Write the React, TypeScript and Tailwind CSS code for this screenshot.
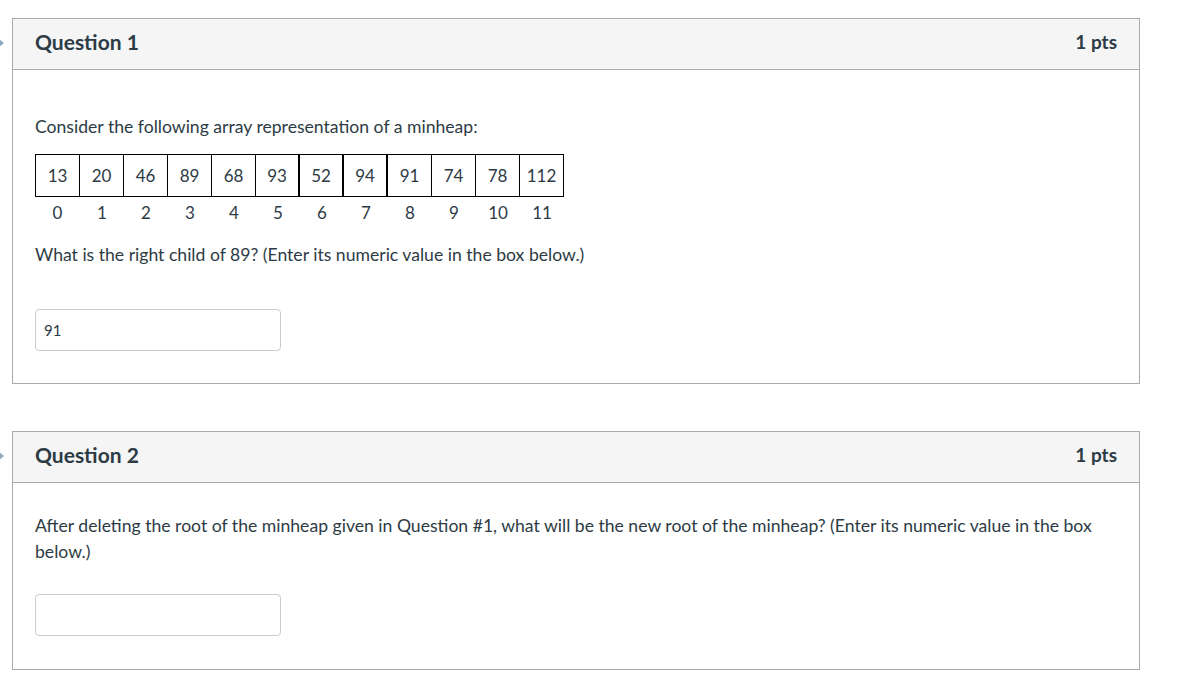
import React from 'react';

const heap = [13, 20, 46, 89, 68, 93, 52, 94, 91, 74, 78, 112];

// cells 93, 52 and 94 have the heavier right edge in the screenshot
const thick = [5, 6, 7];

const Marker: React.FC = () => (
  <svg
    className="absolute left-[-14px] top-[20px]"
    width="6"
    height="8"
    viewBox="0 0 6 8"
  >
    <polygon points="0,0 5,4 0,8" fill="#8fa7b9" />
  </svg>
);

const QuestionHeader: React.FC<{ title: string; points: string }> = ({ title, points }) => (
  <div className="flex h-[51px] items-center justify-between border-b border-[#aaaaaa] bg-[#f5f5f5] px-[22px] pb-[4px]">
    <h2 className="text-[21px] font-bold text-[#2d3b45]">{title}</h2>
    <span className="text-[19px] font-bold text-[#2d3b45]">{points}</span>
  </div>
);

const AnswerBox: React.FC<{ value?: string }> = ({ value }) => (
  <input
    type="text"
    defaultValue={value}
    className="h-[42px] w-[246px] rounded-[4px] border border-[#c7cdd1] bg-white px-[8px] text-[15px] text-[#2d3b45] outline-none"
  />
);

const HeapArray: React.FC = () => (
  <div className="text-[17px]">
    <div className="mt-[14px] flex">
      {heap.map((n, i) => (
        <div
          key={i}
          className={
            'flex h-[43px] items-center justify-center border-y border-black ' +
            (i === 0 ? 'w-[45px] border-l ' : 'w-[44px] ') +
            (thick.includes(i) ? 'border-r-2' : 'border-r')
          }
        >
          {n}
        </div>
      ))}
    </div>
    <div className="mt-[3px] flex h-[26px] items-center">
      {heap.map((_, i) => (
        <div key={i} className={'text-center ' + (i === 0 ? 'w-[45px]' : 'w-[44px]')}>
          {i}
        </div>
      ))}
    </div>
  </div>
);

export default function App() {
  return (
    <div className="min-h-screen bg-white pt-[18px] pl-[12px] font-['Lato','Helvetica_Neue',Arial,sans-serif] text-[17.6px] leading-[26px] text-[#2d3b45]">
      <div className="relative w-[1128px] border border-[#aaaaaa] bg-white">
        <Marker />
        <QuestionHeader title="Question 1" points="1 pts" />
        <div className="px-[22px] pb-[32px]">
          <p className="mt-[44px]">Consider the following array representation of a minheap:</p>
          <HeapArray />
          <p className="mt-[16px]">What is the right child of 89? (Enter its numeric value in the box below.)</p>
          <div className="mt-[41px]">
            <AnswerBox value="91" />
          </div>
        </div>
      </div>

      <div className="relative mt-[47px] w-[1128px] border border-[#aaaaaa] bg-white">
        <Marker />
        <QuestionHeader title="Question 2" points="1 pts" />
        <div className="px-[22px] pb-[33px]">
          <p className="mt-[30px]">
            After deleting the root of the minheap given in Question #1, what will be the new root of the minheap? (Enter its numeric value in the box below.)
          </p>
          <div className="mt-[29px]">
            <AnswerBox />
          </div>
        </div>
      </div>
    </div>
  );
}
